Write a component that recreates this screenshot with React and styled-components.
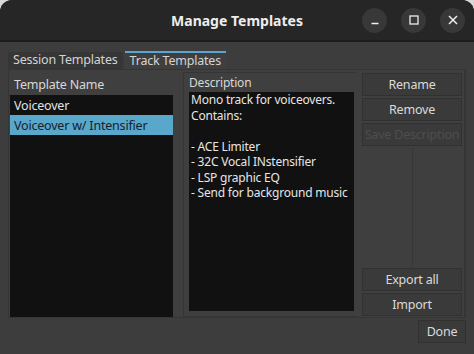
import React from 'react';
import styled, { createGlobalStyle } from 'styled-components';

const GlobalStyle = createGlobalStyle`
    html, body {
        margin: 0;
        padding: 0;
        background: #d9d9d9;
    }
    body {
        font-family: "Noto Sans", "DejaVu Sans", sans-serif;
    }
`;

const Window = styled.div`
    width: 474px;
    height: 354px;
    background: #3d3d3d;
    border-radius: 12px 12px 0 0;
    overflow: hidden;
    display: flex;
    flex-direction: column;
    color: #dedede;
    font-size: 12px;
    letter-spacing: -0.2px;
`;

const TitleBar = styled.header`
    height: 40px;
    flex: none;
    background: #262626;
    border-bottom: 2px solid #1b1b1b;
    display: grid;
    grid-template-columns: 1fr auto 1fr;
    align-items: center;
    padding: 0 9px;
`;

const Title = styled.h1`
    grid-column: 2;
    margin: 0;
    font-size: 14px;
    font-weight: 700;
    letter-spacing: 0;
    color: #ededed;
`;

const Controls = styled.div`
    justify-self: end;
    display: flex;
    gap: 14px;
`;

const CircleButton = styled.button`
    width: 25px;
    height: 25px;
    border-radius: 50%;
    border: none;
    padding: 0;
    background: #383838;
    display: grid;
    place-items: center;
    color: #eeeeee;
`;

const Body = styled.div`
    flex: 1;
    display: flex;
    flex-direction: column;
    padding: 9px 8px 11px;
`;

const TabRow = styled.div`
    height: 18px;
    display: flex;
    gap: 2px;
    align-items: flex-end;
`;

const Tab = styled.div`
    height: ${(p) => (p.$active ? '16px' : '17px')};
    padding: 0 5px 0 5px;
    display: flex;
    align-items: center;
    background: ${(p) => (p.$active ? '#3f3f3f' : '#363636')};
    border-top: ${(p) => (p.$active ? '2px solid #5aa6d0' : 'none')};
    color: #d4d4d4;
    font-size: 12.5px;
    line-height: 1;
`;

const Page = styled.div`
    height: 249px;
    box-sizing: border-box;
    border: 1px solid #353535;
    background: #3f3f3f;
    display: flex;
    padding: 0 0 0 1px;
`;

const TemplatePane = styled.div`
    width: 163px;
    display: flex;
    flex-direction: column;
`;

const ColumnHeader = styled.div`
    height: 25px;
    display: flex;
    align-items: center;
    padding-left: 4px;
    padding-top: 3px;
    box-sizing: border-box;
    color: #d8d8d8;
    font-size: 12.5px;
`;

const List = styled.ul`
    flex: 1;
    margin: 0;
    padding: 0;
    list-style: none;
    background: #111111;
`;

const Row = styled.li`
    height: 20px;
    display: flex;
    align-items: center;
    padding-left: 4px;
    background: ${(p) => (p.$selected ? '#5aa7cc' : 'transparent')};
    color: ${(p) => (p.$selected ? '#16222a' : '#e2e2e2')};
    font-size: 12.5px;
`;

const Handle = styled.div`
    width: 10px;
`;

const DescFrame = styled.div`
    width: 174px;
    margin-top: 2px;
    box-sizing: border-box;
    border: 1px solid #353535;
    border-right: none;
    display: flex;
    flex-direction: column;
    padding: 0 3px 5px 5px;
`;

const FrameLabel = styled.div`
    height: 18px;
    display: flex;
    align-items: center;
    color: #d8d8d8;
`;

const DescBox = styled.div`
    flex: 1;
    margin-top: 1px;
    background: #111111;
    padding: 0 2px;
    line-height: 15.5px;
    white-space: pre;
    color: #e6e6e6;
`;

const ButtonColumn = styled.div`
    flex: 1;
    display: flex;
    flex-direction: column;
    gap: 2px;
    padding: 3px 2px 1px 5px;
    border-right: 1px solid #353535;
`;

const Button = styled.button`
    height: 23px;
    flex: none;
    box-sizing: border-box;
    border: 1px solid #313131;
    background: #3a3a3a;
    color: ${(p) => (p.disabled ? '#4e4e4e' : '#dadada')};
    font-family: inherit;
    font-size: 12.5px;
    letter-spacing: -0.2px;
    white-space: nowrap;
    overflow: hidden;
    padding: 0;
`;

const Spacer = styled.div`
    flex: 1;
    display: flex;
    justify-content: center;
    &::after {
        content: '';
        width: 1px;
        background: #363636;
    }
`;

const Footer = styled.div`
    display: flex;
    justify-content: flex-end;
    padding-top: 2px;
`;

const DoneButton = styled(Button)`
    width: 48px;
`;

const description = `Mono track for voiceovers.
Contains:

- ACE Limiter
- 32C Vocal INstensifier
- LSP graphic EQ
- Send for background music`;

function App() {
    return (
        <>
            <GlobalStyle />
            <Window>
                <TitleBar>
                    <Title>Manage Templates</Title>
                    <Controls>
                        <CircleButton aria-label='minimize'>
                            <svg width='10' height='10' viewBox='0 0 10 10'>
                                <path d='M1.5 8.5h7' stroke='currentColor' strokeWidth='1.4' />
                            </svg>
                        </CircleButton>
                        <CircleButton aria-label='maximize'>
                            <svg width='10' height='10' viewBox='0 0 10 10'>
                                <rect x='1' y='1' width='8' height='8' fill='none' stroke='currentColor' strokeWidth='1.3' />
                            </svg>
                        </CircleButton>
                        <CircleButton aria-label='close'>
                            <svg width='10' height='10' viewBox='0 0 10 10'>
                                <path d='M1 1l8 8M9 1l-8 8' stroke='currentColor' strokeWidth='1.5' />
                            </svg>
                        </CircleButton>
                    </Controls>
                </TitleBar>
                <Body>
                    <TabRow>
                        <Tab>Session Templates</Tab>
                        <Tab $active>Track Templates</Tab>
                    </TabRow>
                    <Page>
                        <TemplatePane>
                            <ColumnHeader>Template Name</ColumnHeader>
                            <List>
                                <Row>Voiceover</Row>
                                <Row $selected>Voiceover w/ Intensifier</Row>
                            </List>
                        </TemplatePane>
                        <Handle />
                        <DescFrame>
                            <FrameLabel>Description</FrameLabel>
                            <DescBox>{description}</DescBox>
                        </DescFrame>
                        <ButtonColumn>
                            <Button>Rename</Button>
                            <Button>Remove</Button>
                            <Button disabled>Save Description</Button>
                            <Spacer />
                            <Button>Export all</Button>
                            <Button>Import</Button>
                        </ButtonColumn>
                    </Page>
                    <Footer>
                        <DoneButton>Done</DoneButton>
                    </Footer>
                </Body>
            </Window>
        </>
    );
}

export default App;
